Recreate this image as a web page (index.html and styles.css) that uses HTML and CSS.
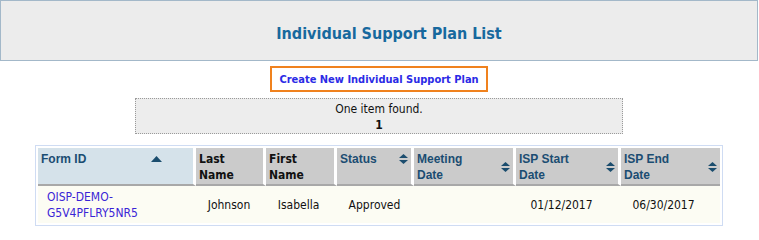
FILE: index.html
```html
<!DOCTYPE html>
<html>
<head>
<meta charset="utf-8">
<link rel="stylesheet" href="styles.css">
</head>
<body>
<div class="page">
  <div class="title-bar"><h1 class="title">Individual Support Plan List</h1></div>
  <div class="actions"><a class="create-btn" href="#">Create New Individual Support Plan</a></div>
  <div class="info">
    <div>One item found.</div>
    <div class="count">1</div>
  </div>
  <table class="grid">
    <thead>
      <tr>
        <th class="c-id sorted"><div class="th-inner"><span>Form ID</span>
          <svg class="arrow-up" width="11" height="6" viewBox="0 0 11 6"><polygon points="0,6 11,6 5.5,0" fill="#1b4d6e"/></svg></div></th>
        <th class="c-last plain"><div class="th-inner"><span>Last<br>Name</span></div></th>
        <th class="c-first plain"><div class="th-inner"><span>First<br>Name</span></div></th>
        <th class="c-status"><div class="th-inner"><span>Status</span>
          <svg class="arrows" width="9" height="10" viewBox="0 0 9 10"><polygon points="0,4 9,4 4.5,0" fill="#1b4d6e"/><polygon points="0,6 9,6 4.5,10" fill="#1b4d6e"/></svg></div></th>
        <th class="c-meet"><div class="th-inner"><span>Meeting<br>Date</span>
          <svg class="arrows" width="9" height="10" viewBox="0 0 9 10"><polygon points="0,4 9,4 4.5,0" fill="#1b4d6e"/><polygon points="0,6 9,6 4.5,10" fill="#1b4d6e"/></svg></div></th>
        <th class="c-start"><div class="th-inner"><span>ISP Start<br>Date</span>
          <svg class="arrows" width="9" height="10" viewBox="0 0 9 10"><polygon points="0,4 9,4 4.5,0" fill="#1b4d6e"/><polygon points="0,6 9,6 4.5,10" fill="#1b4d6e"/></svg></div></th>
        <th class="c-end last"><div class="th-inner"><span>ISP End<br>Date</span>
          <svg class="arrows" width="9" height="10" viewBox="0 0 9 10"><polygon points="0,4 9,4 4.5,0" fill="#1b4d6e"/><polygon points="0,6 9,6 4.5,10" fill="#1b4d6e"/></svg></div></th>
      </tr>
    </thead>
    <tbody>
      <tr>
        <td class="id-cell"><a class="id-link" href="#">OISP-DEMO-<br>G5V4PFLRY5NR5</a></td>
        <td class="name-cell">Johnson</td>
        <td class="first-cell">Isabella</td>
        <td class="status-cell">Approved</td>
        <td></td>
        <td class="date-cell">01/12/2017</td>
        <td class="date-cell">06/30/2017</td>
      </tr>
    </tbody>
  </table>
</div>
</body>
</html>
```

FILE: styles.css
```css
html, body {
  margin: 0;
  padding: 0;
  background: #ffffff;
}

.page {
  width: 758px;
  font-family: "DejaVu Sans Condensed", "DejaVu Sans", sans-serif;
  font-size: 12px;
  color: #111111;
}

.title-bar {
  box-sizing: border-box;
  width: 758px;
  height: 61px;
  background: #ececec;
  border: 1px solid #a3b8c9;
  display: flex;
  align-items: center;
  justify-content: center;
  padding: 5px 0 0 20px;
}

.title {
  margin: 0;
  font-family: "DejaVu Sans Condensed", "DejaVu Sans", sans-serif;
  font-weight: bold;
  font-size: 16px;
  color: #17699e;
}

.actions {
  display: flex;
  justify-content: center;
  margin-top: 5px;
}

.create-btn {
  box-sizing: border-box;
  width: 218px;
  height: 26px;
  border: 2px solid #f0821e;
  display: flex;
  align-items: center;
  justify-content: center;
  font-weight: bold;
  font-size: 11px;
  color: #2b2be6;
  text-decoration: none;
}

.info {
  box-sizing: border-box;
  width: 488px;
  height: 36px;
  margin: 6px auto 11px auto;
  border: 1px dotted #9a9a9a;
  background: #ededed;
  text-align: center;
  line-height: 16px;
  padding-top: 2px;
}

.count {
  font-weight: bold;
}

.grid {
  box-sizing: border-box;
  width: 688px;
  margin: 0 auto;
  border: 1px solid #cfdcf3;
  padding: 2px;
  border-spacing: 0;
  border-collapse: separate;
  table-layout: fixed;
}

.grid th {
  box-sizing: border-box;
  height: 38px;
  padding: 3px 3px 0 3px;
  vertical-align: top;
  text-align: left;
  background: #cbcbcb;
  border-bottom: 2px solid #a8a8a8;
  border-right: 3px solid #ffffff;
  font-family: "Liberation Sans", Arial, sans-serif;
  font-weight: bold;
  font-size: 12px;
  line-height: 16px;
  color: #1b4d72;
}

.grid th.last {
  border-right: none;
}

.grid th.sorted {
  background: #d5e2ea;
}

.grid th.plain {
  color: #111111;
  font-family: "DejaVu Sans Condensed", "DejaVu Sans", sans-serif;
}

.c-id { width: 158px; }
.c-last { width: 70px; }
.c-first { width: 71px; }
.c-status { width: 77px; }
.c-meet { width: 102px; }
.c-start { width: 105px; }
.c-end { width: 99px; }

.th-inner {
  display: flex;
  align-items: center;
  justify-content: space-between;
}

.arrow-up {
  display: block;
  margin-right: 28px;
  flex: none;
}

.arrows {
  display: block;
  flex: none;
}

.grid td {
  box-sizing: border-box;
  height: 37px;
  padding: 0;
  background: #fcfcf3;
  text-align: center;
  vertical-align: middle;
  line-height: 16px;
}

.grid td.id-cell {
  text-align: left;
  padding-left: 9px;
}

.grid td.name-cell {
  padding-right: 4px;
}

.grid td.first-cell {
  padding-right: 6px;
}

.grid td.status-cell {
  padding-right: 2px;
}

.grid td.date-cell {
  padding-right: 14px;
}

.id-link {
  color: #3a24d6;
  text-decoration: none;
}
```
